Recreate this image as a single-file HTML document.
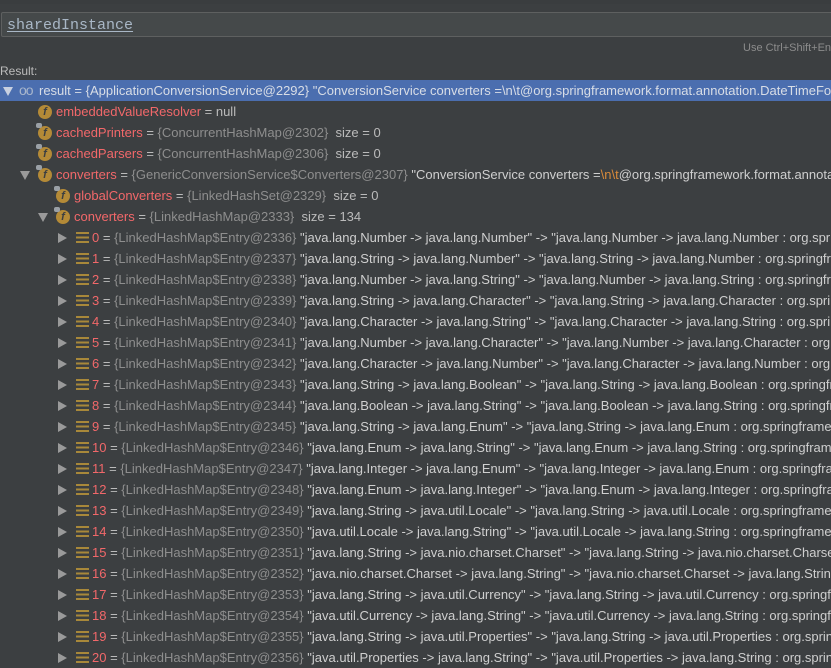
<!DOCTYPE html>
<html><head><meta charset="utf-8"><style>
body{margin:0;width:831px;height:661px;overflow:hidden;background:#3c3f41;font-family:"Liberation Sans","Noto Sans CJK SC",sans-serif;font-size:13px;color:#bbbbbb;position:relative}
.top{position:absolute;left:0;top:0;width:831px;height:4px;background:#3a3d3f}
.inp{position:absolute;left:1px;top:12px;width:840px;height:23px;background:#45494a;border:1px solid #5e6060;border-radius:2px}
.inp span{position:absolute;left:5px;top:4px;font-family:"Liberation Mono",monospace;font-size:15px;color:#a9b7c6;text-decoration:underline;text-underline-offset:2px}
.hint{position:absolute;left:743px;top:42px;font-size:11px;color:#8c8c8c;white-space:nowrap}
.res{position:absolute;left:0;top:64px;font-size:12px;color:#bbbbbb}
.row{position:absolute;left:0;width:831px;height:21px;line-height:21px;white-space:nowrap;overflow:hidden}
.sel{background:#4b6eaf;color:#d8dde6}
.row>*{position:absolute;top:0}
.tri{width:0;height:0;border-left:9px solid #9a9a9a;border-top:5px solid transparent;border-bottom:5px solid transparent;top:6px}
.tdn{width:0;height:0;border-top:9px solid #9a9a9a;border-left:5px solid transparent;border-right:5px solid transparent;top:7px}
.f{width:14px;height:14px;border-radius:50%;background:#b48a37;top:4px;color:#3c3f41;font-size:11px;line-height:14px;text-align:center;font-weight:bold}
.lk:before{content:"";position:absolute;left:-2px;top:-3px;width:6px;height:5px;border-radius:2px;background:#9aa0a6}
.l{width:13px;height:11px;top:5px;background:linear-gradient(#a8883a 0 2px,transparent 2px 4.5px,#a8883a 4.5px 6.5px,transparent 6.5px 9px,#a8883a 9px 11px)}
.n{color:#f2686a}.t{color:#8e8e8e}.v{color:#cfcfcf}.o{color:#d98a3a}
</style></head><body>
<div class="top"></div>
<div class="inp"><span>sharedInstance</span></div>
<div class="hint">Use Ctrl+Shift+Enter</div>
<div class="res">Result:</div>

<div class="row sel" style="top:80px"><i class="tdn" style="left:3px;border-top-color:#c8d0e0"></i><span style="left:19px;top:0;color:#a8b6cc;font-size:14px;letter-spacing:-1px">oo</span><span style="left:39px">result = {ApplicationConversionService@2292} "ConversionService converters =\n\t@org.springframework.format.annotation.DateTimeFormat</span></div>
<div class="row" style="top:101px"><i class="f" style="left:38px">f</i><span style="left:56px"><span class="n">embeddedValueResolver</span> = null</span></div>
<div class="row" style="top:122px"><i class="f lk" style="left:38px">f</i><span style="left:56px"><span class="n">cachedPrinters</span> = <span class="t">{ConcurrentHashMap@2302}</span>&nbsp; size = 0</span></div>
<div class="row" style="top:143px"><i class="f lk" style="left:38px">f</i><span style="left:56px"><span class="n">cachedParsers</span> = <span class="t">{ConcurrentHashMap@2306}</span>&nbsp; size = 0</span></div>
<div class="row" style="top:164px"><i class="tdn" style="left:20px"></i><i class="f lk" style="left:38px">f</i><span style="left:56px"><span class="n">converters</span> = <span class="t">{GenericConversionService$Converters@2307}</span> <span class="v">"ConversionService converters =<span class="o">\n\t</span>@org.springframework.format.annotation</span></span></div>
<div class="row" style="top:185px"><i class="f lk" style="left:56px">f</i><span style="left:74px"><span class="n">globalConverters</span> = <span class="t">{LinkedHashSet@2329}</span>&nbsp; size = 0</span></div>
<div class="row" style="top:206px"><i class="tdn" style="left:38px"></i><i class="f lk" style="left:56px">f</i><span style="left:74px"><span class="n">converters</span> = <span class="t">{LinkedHashMap@2333}</span>&nbsp; size = 134</span></div>

<div class="row" style="top:227px"><i class="tri" style="left:58px"></i><i class="l" style="left:76px"></i><span style="left:92px"><span class="n">0</span> = <span class="t">{LinkedHashMap$Entry@2336}</span> <span class="v">"java.lang.Number -&gt; java.lang.Number" -&gt; "java.lang.Number -&gt; java.lang.Number : org.springframework</span></span></div>
<div class="row" style="top:248px"><i class="tri" style="left:58px"></i><i class="l" style="left:76px"></i><span style="left:92px"><span class="n">1</span> = <span class="t">{LinkedHashMap$Entry@2337}</span> <span class="v">"java.lang.String -&gt; java.lang.Number" -&gt; "java.lang.String -&gt; java.lang.Number : org.springframework</span></span></div>
<div class="row" style="top:269px"><i class="tri" style="left:58px"></i><i class="l" style="left:76px"></i><span style="left:92px"><span class="n">2</span> = <span class="t">{LinkedHashMap$Entry@2338}</span> <span class="v">"java.lang.Number -&gt; java.lang.String" -&gt; "java.lang.Number -&gt; java.lang.String : org.springframework</span></span></div>
<div class="row" style="top:290px"><i class="tri" style="left:58px"></i><i class="l" style="left:76px"></i><span style="left:92px"><span class="n">3</span> = <span class="t">{LinkedHashMap$Entry@2339}</span> <span class="v">"java.lang.String -&gt; java.lang.Character" -&gt; "java.lang.String -&gt; java.lang.Character : org.springframework</span></span></div>
<div class="row" style="top:311px"><i class="tri" style="left:58px"></i><i class="l" style="left:76px"></i><span style="left:92px"><span class="n">4</span> = <span class="t">{LinkedHashMap$Entry@2340}</span> <span class="v">"java.lang.Character -&gt; java.lang.String" -&gt; "java.lang.Character -&gt; java.lang.String : org.springframework</span></span></div>
<div class="row" style="top:332px"><i class="tri" style="left:58px"></i><i class="l" style="left:76px"></i><span style="left:92px"><span class="n">5</span> = <span class="t">{LinkedHashMap$Entry@2341}</span> <span class="v">"java.lang.Number -&gt; java.lang.Character" -&gt; "java.lang.Number -&gt; java.lang.Character : org.springframework</span></span></div>
<div class="row" style="top:353px"><i class="tri" style="left:58px"></i><i class="l" style="left:76px"></i><span style="left:92px"><span class="n">6</span> = <span class="t">{LinkedHashMap$Entry@2342}</span> <span class="v">"java.lang.Character -&gt; java.lang.Number" -&gt; "java.lang.Character -&gt; java.lang.Number : org.springframework</span></span></div>
<div class="row" style="top:374px"><i class="tri" style="left:58px"></i><i class="l" style="left:76px"></i><span style="left:92px"><span class="n">7</span> = <span class="t">{LinkedHashMap$Entry@2343}</span> <span class="v">"java.lang.String -&gt; java.lang.Boolean" -&gt; "java.lang.String -&gt; java.lang.Boolean : org.springframework</span></span></div>
<div class="row" style="top:395px"><i class="tri" style="left:58px"></i><i class="l" style="left:76px"></i><span style="left:92px"><span class="n">8</span> = <span class="t">{LinkedHashMap$Entry@2344}</span> <span class="v">"java.lang.Boolean -&gt; java.lang.String" -&gt; "java.lang.Boolean -&gt; java.lang.String : org.springframework</span></span></div>
<div class="row" style="top:416px"><i class="tri" style="left:58px"></i><i class="l" style="left:76px"></i><span style="left:92px"><span class="n">9</span> = <span class="t">{LinkedHashMap$Entry@2345}</span> <span class="v">"java.lang.String -&gt; java.lang.Enum" -&gt; "java.lang.String -&gt; java.lang.Enum : org.springframework</span></span></div>
<div class="row" style="top:437px"><i class="tri" style="left:58px"></i><i class="l" style="left:76px"></i><span style="left:92px"><span class="n">10</span> = <span class="t">{LinkedHashMap$Entry@2346}</span> <span class="v">"java.lang.Enum -&gt; java.lang.String" -&gt; "java.lang.Enum -&gt; java.lang.String : org.springframework</span></span></div>
<div class="row" style="top:458px"><i class="tri" style="left:58px"></i><i class="l" style="left:76px"></i><span style="left:92px"><span class="n">11</span> = <span class="t">{LinkedHashMap$Entry@2347}</span> <span class="v">"java.lang.Integer -&gt; java.lang.Enum" -&gt; "java.lang.Integer -&gt; java.lang.Enum : org.springframework</span></span></div>
<div class="row" style="top:479px"><i class="tri" style="left:58px"></i><i class="l" style="left:76px"></i><span style="left:92px"><span class="n">12</span> = <span class="t">{LinkedHashMap$Entry@2348}</span> <span class="v">"java.lang.Enum -&gt; java.lang.Integer" -&gt; "java.lang.Enum -&gt; java.lang.Integer : org.springframework</span></span></div>
<div class="row" style="top:500px"><i class="tri" style="left:58px"></i><i class="l" style="left:76px"></i><span style="left:92px"><span class="n">13</span> = <span class="t">{LinkedHashMap$Entry@2349}</span> <span class="v">"java.lang.String -&gt; java.util.Locale" -&gt; "java.lang.String -&gt; java.util.Locale : org.springframework</span></span></div>
<div class="row" style="top:521px"><i class="tri" style="left:58px"></i><i class="l" style="left:76px"></i><span style="left:92px"><span class="n">14</span> = <span class="t">{LinkedHashMap$Entry@2350}</span> <span class="v">"java.util.Locale -&gt; java.lang.String" -&gt; "java.util.Locale -&gt; java.lang.String : org.springframework</span></span></div>
<div class="row" style="top:542px"><i class="tri" style="left:58px"></i><i class="l" style="left:76px"></i><span style="left:92px"><span class="n">15</span> = <span class="t">{LinkedHashMap$Entry@2351}</span> <span class="v">"java.lang.String -&gt; java.nio.charset.Charset" -&gt; "java.lang.String -&gt; java.nio.charset.Charset : org</span></span></div>
<div class="row" style="top:563px"><i class="tri" style="left:58px"></i><i class="l" style="left:76px"></i><span style="left:92px"><span class="n">16</span> = <span class="t">{LinkedHashMap$Entry@2352}</span> <span class="v">"java.nio.charset.Charset -&gt; java.lang.String" -&gt; "java.nio.charset.Charset -&gt; java.lang.String : org</span></span></div>
<div class="row" style="top:584px"><i class="tri" style="left:58px"></i><i class="l" style="left:76px"></i><span style="left:92px"><span class="n">17</span> = <span class="t">{LinkedHashMap$Entry@2353}</span> <span class="v">"java.lang.String -&gt; java.util.Currency" -&gt; "java.lang.String -&gt; java.util.Currency : org.springframework</span></span></div>
<div class="row" style="top:605px"><i class="tri" style="left:58px"></i><i class="l" style="left:76px"></i><span style="left:92px"><span class="n">18</span> = <span class="t">{LinkedHashMap$Entry@2354}</span> <span class="v">"java.util.Currency -&gt; java.lang.String" -&gt; "java.util.Currency -&gt; java.lang.String : org.springframework</span></span></div>
<div class="row" style="top:626px"><i class="tri" style="left:58px"></i><i class="l" style="left:76px"></i><span style="left:92px"><span class="n">19</span> = <span class="t">{LinkedHashMap$Entry@2355}</span> <span class="v">"java.lang.String -&gt; java.util.Properties" -&gt; "java.lang.String -&gt; java.util.Properties : org.springframework</span></span></div>
<div class="row" style="top:647px"><i class="tri" style="left:58px"></i><i class="l" style="left:76px"></i><span style="left:92px"><span class="n">20</span> = <span class="t">{LinkedHashMap$Entry@2356}</span> <span class="v">"java.util.Properties -&gt; java.lang.String" -&gt; "java.util.Properties -&gt; java.lang.String : org.springframework</span></span></div>
</body></html>
